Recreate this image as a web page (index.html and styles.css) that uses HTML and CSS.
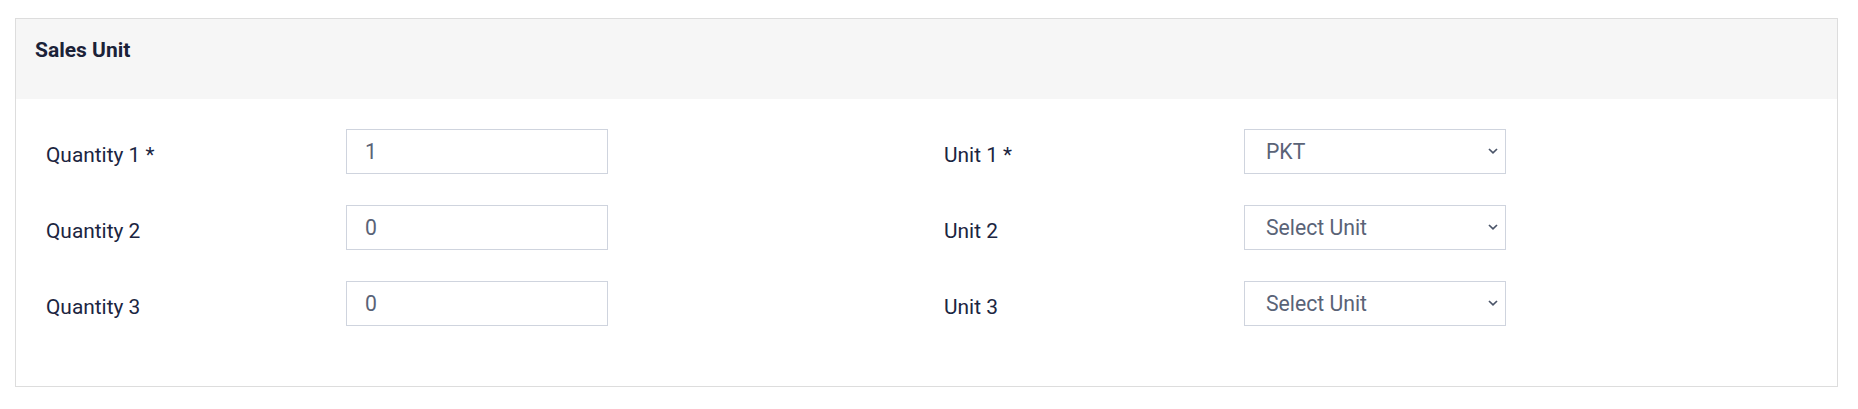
FILE: index.html
```html
<!DOCTYPE html>
<html lang="en">
<head>
<meta charset="utf-8">
<title>Sales Unit</title>
<link rel="stylesheet" href="styles.css">
</head>
<body>
<div class="card">
  <div class="card-header">Sales Unit</div>
  <div class="card-body">
    <div class="half">
      <div class="field">
        <label class="label" for="q1">Quantity 1 *</label>
        <input class="control" id="q1" type="text" value="1">
      </div>
      <div class="field">
        <label class="label" for="q2">Quantity 2</label>
        <input class="control" id="q2" type="text" value="0">
      </div>
      <div class="field">
        <label class="label" for="q3">Quantity 3</label>
        <input class="control" id="q3" type="text" value="0">
      </div>
    </div>
    <div class="half">
      <div class="field">
        <label class="label" for="u1">Unit 1 *</label>
        <div class="select-wrap">
          <select class="control select" id="u1"><option>PKT</option></select>
          <svg class="chev" width="10" height="6" viewBox="0 0 10 6"><polyline points="1,1 5,4.8 9,1" fill="none" stroke="#4a5468" stroke-width="1.7"/></svg>
        </div>
      </div>
      <div class="field">
        <label class="label" for="u2">Unit 2</label>
        <div class="select-wrap">
          <select class="control select" id="u2"><option>Select Unit</option></select>
          <svg class="chev" width="10" height="6" viewBox="0 0 10 6"><polyline points="1,1 5,4.8 9,1" fill="none" stroke="#4a5468" stroke-width="1.7"/></svg>
        </div>
      </div>
      <div class="field">
        <label class="label" for="u3">Unit 3</label>
        <div class="select-wrap">
          <select class="control select" id="u3"><option>Select Unit</option></select>
          <svg class="chev" width="10" height="6" viewBox="0 0 10 6"><polyline points="1,1 5,4.8 9,1" fill="none" stroke="#4a5468" stroke-width="1.7"/></svg>
        </div>
      </div>
    </div>
  </div>
</div>
</body>
</html>
```
FILE: styles.css
```css
* { box-sizing: border-box; }
html, body { margin: 0; padding: 0; background: #ffffff; }
body {
  font-family: Roboto, "Liberation Sans", Arial, sans-serif;
  padding: 18px 20px 0 15px;
}
.card {
  border: 1px solid #dddddd;
  background: #ffffff;
  height: 369px;
}
.card-header {
  background: #f6f6f6;
  height: 80px;
  padding: 16px 19px 0 19px;
  font-size: 21px;
  line-height: 30px;
  font-weight: 700;
  color: #1b2238;
}
.card-body {
  display: grid;
  grid-template-columns: 898px 1fr;
  padding: 30px 0 0 30px;
}
.half {
  display: flex;
  flex-direction: column;
  gap: 31px;
}
.field {
  display: flex;
  align-items: flex-start;
  height: 45px;
}
.label {
  width: 300px;
  flex: none;
  padding-top: 11px;
  font-size: 20.9px;
  line-height: 30px;
  color: #1b2541;
}
.control {
  width: 262px;
  height: 45px;
  border: 1px solid #cfd4de;
  border-radius: 0;
  background: #ffffff;
  padding: 0 18px;
  font-family: Roboto, "Liberation Sans", Arial, sans-serif;
  font-size: 21.2px;
  line-height: 30px;
  color: #5a6377;
  outline: none;
  margin: 0;
}
.select-wrap {
  position: relative;
  width: 262px;
  height: 45px;
}
.select {
  appearance: none;
  -webkit-appearance: none;
  display: block;
  padding-left: 21px;
}
.chev {
  position: absolute;
  right: 8px;
  top: 19px;
  pointer-events: none;
}
```
